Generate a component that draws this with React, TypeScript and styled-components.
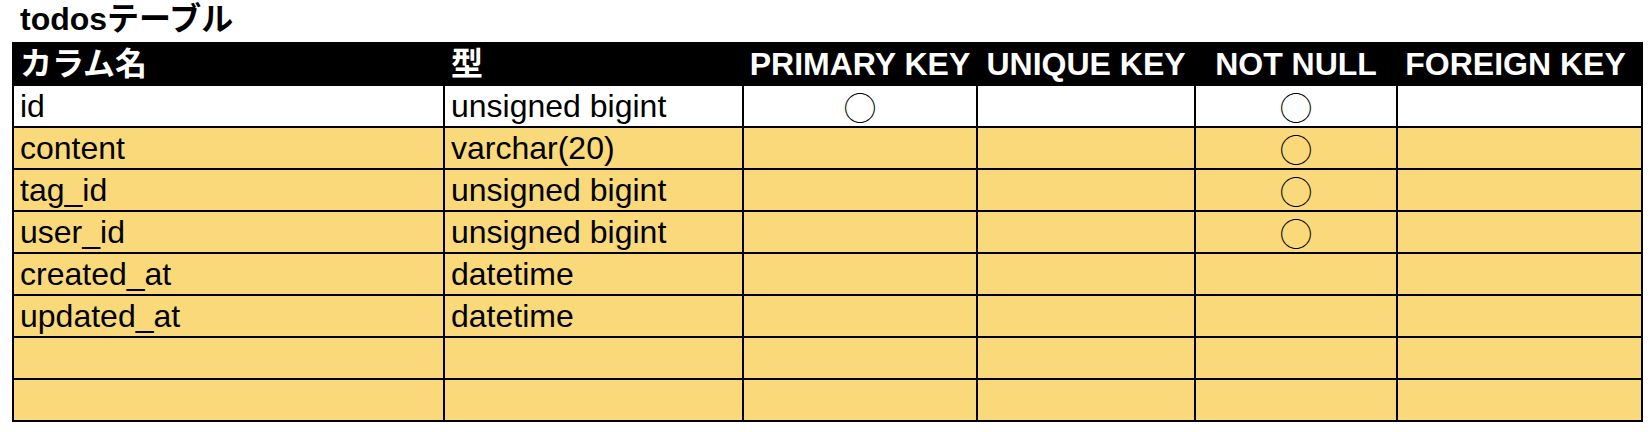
import React from "react";
import styled, { createGlobalStyle } from "styled-components";

const GlobalStyle = createGlobalStyle`
  html, body { margin: 0; padding: 0; background: #ffffff; }
  body { font-family: "Liberation Sans", "Noto Sans CJK JP", sans-serif; color: #000; }
`;

const Page = styled.div`
  padding-left: 12px;
`;

const Title = styled.div`
  font-family: "Liberation Sans", "Noto Sans CJK JP", sans-serif;
  font-weight: 700;
  font-size: 32px;
  line-height: 39px;
  padding-left: 8px;
  margin-bottom: 3px;
`;

const Grid = styled.div`
  display: grid;
  grid-template-columns: 429px 297px 232px 216px 200px 243px;
  gap: 2px;
  padding: 2px;
  background: #000;
  width: fit-content;
`;

const HeadCell = styled.div<{ $center?: boolean; $inset?: number }>`
  height: 40px;
  background: #000;
  color: #fff;
  font-family: "Liberation Sans", "Noto Sans CJK JP", sans-serif;
  font-weight: 700;
  font-size: 32px;
  line-height: 40px;
  white-space: nowrap;
  text-align: ${(p) => (p.$center ? "center" : "left")};
  padding: ${(p) => (p.$center ? `0 ${p.$inset ?? 0}px 0 0` : "0 6px")};
`;

const Cell = styled.div<{ $white?: boolean; $center?: boolean }>`
  height: 40px;
  background: ${(p) => (p.$white ? "#ffffff" : "#f9d979")};
  font-family: "Liberation Sans", "Noto Sans CJK JP", sans-serif;
  font-size: 32px;
  line-height: 40px;
  white-space: nowrap;
  text-align: ${(p) => (p.$center ? "center" : "left")};
  padding: 0 ${(p) => (p.$center ? "0" : "6px")};
`;

const Mark = styled.span`
  font-family: "Noto Sans CJK JP", sans-serif;
  font-size: 32px;
  font-weight: 400;
`;

type Row = { name: string; type: string; pk?: boolean; uk?: boolean; nn?: boolean; fk?: boolean };

const rows: Row[] = [
  { name: "id", type: "unsigned bigint", pk: true, nn: true },
  { name: "content", type: "varchar(20)", nn: true },
  { name: "tag_id", type: "unsigned bigint", nn: true },
  { name: "user_id", type: "unsigned bigint", nn: true },
  { name: "created_at", type: "datetime" },
  { name: "updated_at", type: "datetime" },
  { name: "", type: "" },
  { name: "", type: "" },
];

const headers: { label: string; inset: number }[] = [
  { label: "PRIMARY KEY", inset: 0 },
  { label: "UNIQUE KEY", inset: 0 },
  { label: "NOT NULL", inset: 0 },
  { label: "FOREIGN KEY", inset: 8 },
];

export default function App() {
  return (
    <Page>
      <GlobalStyle />
      <Title>todosテーブル</Title>
      <Grid>
        <HeadCell>カラム名</HeadCell>
        <HeadCell>型</HeadCell>
        {headers.map((h) => (
          <HeadCell key={h.label} $center $inset={h.inset}>
            {h.label}
          </HeadCell>
        ))}
        {rows.map((r, i) => {
          const white = i === 0;
          const flags = [r.pk, r.uk, r.nn, r.fk];
          return (
            <React.Fragment key={i}>
              <Cell $white={white}>{r.name}</Cell>
              <Cell $white={white}>{r.type}</Cell>
              {flags.map((f, j) => (
                <Cell key={j} $white={white} $center>
                  {f ? <Mark>◯</Mark> : null}
                </Cell>
              ))}
            </React.Fragment>
          );
        })}
      </Grid>
    </Page>
  );
}
